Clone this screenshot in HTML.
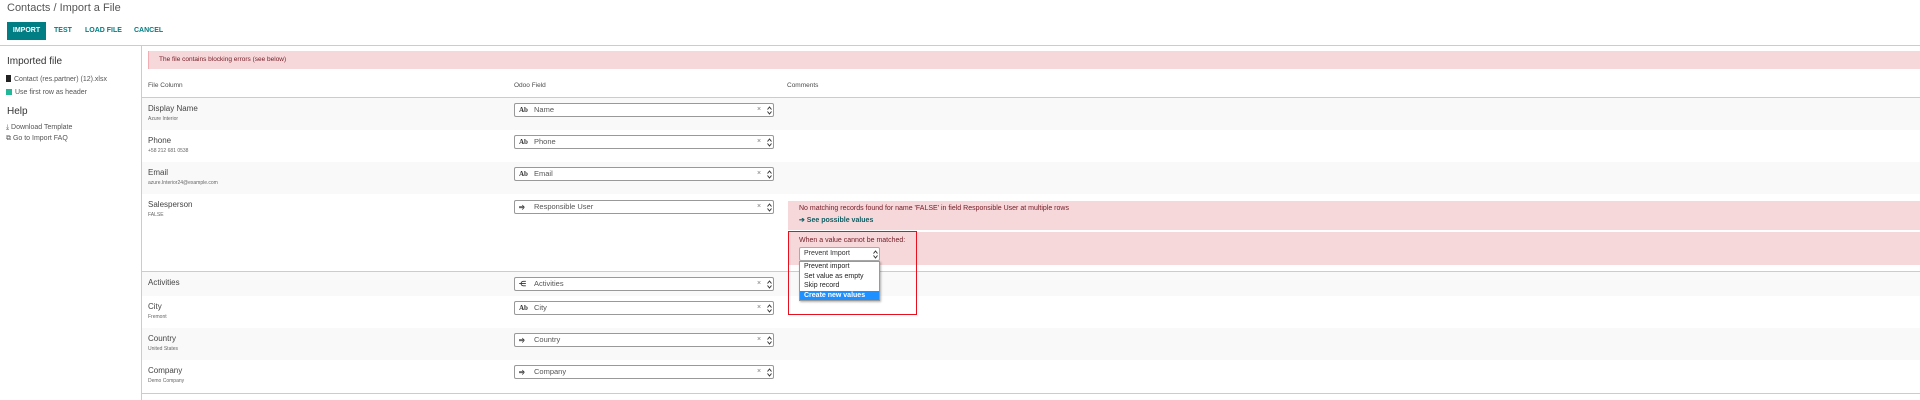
<!DOCTYPE html>
<html><head><meta charset="utf-8"><style>
*{margin:0;padding:0;box-sizing:border-box}
body{width:1920px;height:400px;background:#fff;font-family:"Liberation Sans",sans-serif;color:#4c4c4c;position:relative;overflow:hidden}
.a{position:absolute;white-space:nowrap}
.btn{position:absolute;top:22px;height:18px;font-size:7px;font-weight:bold;line-height:18px;color:#017e84}
.row{position:absolute;left:142px;right:0}
.lbl{position:absolute;left:6px;font-size:8px;color:#444}
.sub{position:absolute;left:6px;font-size:5px;color:#666}
.sel{position:absolute;left:514px;width:260px;height:14px;border:1px solid #999;border-radius:2px;background:#fff;font-size:7.5px;line-height:12px}
.sel .ic{position:absolute;left:4px;font-size:7px;color:#333;font-family:"Liberation Serif",serif;font-weight:bold}
.sel .t{position:absolute;left:19px;color:#555}
.sel .x{position:absolute;left:242px;color:#777;font-size:7px}
.sel svg,.ps svg{position:absolute;left:252px;top:2px}
.gray{background:#f9f9f9}
</style></head><body>
<div class="a" style="left:7px;top:2px;font-size:11px;color:#555">Contacts / Import a File</div>
<div class="btn" style="left:7px;width:39px;background:#017e84;color:#fff;text-align:center">IMPORT</div>
<div class="btn" style="left:54px">TEST</div>
<div class="btn" style="left:85px">LOAD FILE</div>
<div class="btn" style="left:134px">CANCEL</div>
<div class="a" style="left:0;right:0;top:45px;height:1px;background:#ccc"></div>
<div class="a" style="left:141px;top:45px;width:1px;height:355px;background:#ccc"></div>

<div class="a" style="left:7px;top:56px;font-size:10px;color:#333">Imported file</div>
<div class="a" style="left:6px;top:75px;font-size:7px;color:#555"><span style="display:inline-block;width:5px;height:7px;background:#222;vertical-align:-1px;margin-right:3px"></span>Contact (res.partner) (12).xlsx</div>
<div class="a" style="left:6px;top:89px;font-size:7px;color:#555"><span style="display:inline-block;width:6px;height:6px;background:#21b799;vertical-align:-1px;margin-right:3px"></span>Use first row as header</div>
<div class="a" style="left:7px;top:106px;font-size:10px;color:#333">Help</div>
<div class="a" style="left:6px;top:124px;font-size:7px;color:#555">⤓ Download Template</div>
<div class="a" style="left:6px;top:135px;font-size:7px;color:#555">⧉ Go to Import FAQ</div>

<div class="a" style="left:148px;right:0;top:51px;height:18px;background:#f6d7da;border-left:1px solid #f1aeb5"></div>
<div class="a" style="left:159px;top:56px;font-size:6.5px;color:#721c24">The file contains blocking errors (see below)</div>
<div class="a" style="left:148px;top:82px;font-size:6.5px">File Column</div>
<div class="a" style="left:514px;top:82px;font-size:6.5px">Odoo Field</div>
<div class="a" style="left:787px;top:82px;font-size:6.5px">Comments</div>
<div class="a" style="left:142px;right:0;top:97px;height:1px;background:#ccc"></div>

<div class="row gray" style="top:98px;height:32px"><div class="lbl" style="top:6px">Display Name</div><div class="sub" style="top:18px">Azure Interior</div></div>
<div class="row" style="top:130px;height:32px"><div class="lbl" style="top:6px">Phone</div><div class="sub" style="top:18px">+58 212 681 0538</div></div>
<div class="row gray" style="top:162px;height:32px"><div class="lbl" style="top:6px">Email</div><div class="sub" style="top:18px">azure.Interior24@example.com</div></div>
<div class="row" style="top:194px;height:77px"><div class="lbl" style="top:6px">Salesperson</div><div class="sub" style="top:18px">FALSE</div></div>
<div class="a" style="left:142px;right:0;top:271px;height:1px;background:#ccc"></div>
<div class="row gray" style="top:272px;height:24px"><div class="lbl" style="top:6px">Activities</div></div>
<div class="row" style="top:296px;height:32px"><div class="lbl" style="top:6px">City</div><div class="sub" style="top:18px">Fremont</div></div>
<div class="row gray" style="top:328px;height:32px"><div class="lbl" style="top:6px">Country</div><div class="sub" style="top:18px">United States</div></div>
<div class="row" style="top:360px;height:32px"><div class="lbl" style="top:6px">Company</div><div class="sub" style="top:18px">Demo Company</div></div>
<div class="a" style="left:142px;right:0;top:393px;height:1px;background:#ccc"></div>

<div class="sel" style="top:103px"><span class="ic">Ab</span><span class="t">Name</span><span class="x">×</span><svg width="5" height="9" viewBox="0 0 5 9"><path d="M0.5 3.5L2.5 1L4.5 3.5M0.5 5.5L2.5 8L4.5 5.5" fill="none" stroke="#333"/></svg></div>
<div class="sel" style="top:135px"><span class="ic">Ab</span><span class="t">Phone</span><span class="x">×</span><svg width="5" height="9" viewBox="0 0 5 9"><path d="M0.5 3.5L2.5 1L4.5 3.5M0.5 5.5L2.5 8L4.5 5.5" fill="none" stroke="#333"/></svg></div>
<div class="sel" style="top:167px"><span class="ic">Ab</span><span class="t">Email</span><span class="x">×</span><svg width="5" height="9" viewBox="0 0 5 9"><path d="M0.5 3.5L2.5 1L4.5 3.5M0.5 5.5L2.5 8L4.5 5.5" fill="none" stroke="#333"/></svg></div>
<div class="sel" style="top:200px"><span class="ic">⥤</span><span class="t">Responsible User</span><span class="x">×</span><svg width="5" height="9" viewBox="0 0 5 9"><path d="M0.5 3.5L2.5 1L4.5 3.5M0.5 5.5L2.5 8L4.5 5.5" fill="none" stroke="#333"/></svg></div>
<div class="sel" style="top:277px"><span class="ic">⋲</span><span class="t">Activities</span><span class="x">×</span><svg width="5" height="9" viewBox="0 0 5 9"><path d="M0.5 3.5L2.5 1L4.5 3.5M0.5 5.5L2.5 8L4.5 5.5" fill="none" stroke="#333"/></svg></div>
<div class="sel" style="top:301px"><span class="ic">Ab</span><span class="t">City</span><span class="x">×</span><svg width="5" height="9" viewBox="0 0 5 9"><path d="M0.5 3.5L2.5 1L4.5 3.5M0.5 5.5L2.5 8L4.5 5.5" fill="none" stroke="#333"/></svg></div>
<div class="sel" style="top:333px"><span class="ic">⥤</span><span class="t">Country</span><span class="x">×</span><svg width="5" height="9" viewBox="0 0 5 9"><path d="M0.5 3.5L2.5 1L4.5 3.5M0.5 5.5L2.5 8L4.5 5.5" fill="none" stroke="#333"/></svg></div>
<div class="sel" style="top:365px"><span class="ic">⥤</span><span class="t">Company</span><span class="x">×</span><svg width="5" height="9" viewBox="0 0 5 9"><path d="M0.5 3.5L2.5 1L4.5 3.5M0.5 5.5L2.5 8L4.5 5.5" fill="none" stroke="#333"/></svg></div>

<div class="a" style="left:788px;right:0;top:201px;height:29px;background:#f6d7da"></div>
<div class="a" style="left:799px;top:205px;font-size:7px;color:#721c24">No matching records found for name 'FALSE' in field Responsible User at multiple rows</div>
<div class="a" style="left:799px;top:216px;font-size:7px;color:#0f5e63;font-weight:bold">➔ See possible values</div>
<div class="a" style="left:788px;right:0;top:232px;height:33px;background:#f6d7da"></div>
<div class="a" style="left:799px;top:237px;font-size:7px;color:#721c24">When a value cannot be matched:</div>
<div class="a ps" style="left:799px;top:247px;width:81px;height:14px;background:#fff;border:1px solid #aaa;border-radius:2px;font-size:7px;line-height:12px;padding-left:4px;color:#333">Prevent Import<svg width="5" height="9" viewBox="0 0 5 9" style="left:73px"><path d="M0.5 3.5L2.5 1L4.5 3.5M0.5 5.5L2.5 8L4.5 5.5" fill="none" stroke="#333"/></svg></div>
<div class="a" style="left:799px;top:261px;width:81px;height:40px;background:#fff;border:1px solid #999;box-shadow:1px 1px 2px rgba(0,0,0,.3);font-size:7px;line-height:9.5px;color:#222">
<div style="padding-left:4px">Prevent import</div><div style="padding-left:4px">Set value as empty</div><div style="padding-left:4px">Skip record</div><div style="padding-left:4px;background:#1e90ff;color:#fff;font-weight:bold">Create new values</div></div>
<div class="a" style="left:788px;top:231px;width:129px;height:84px;border:1px solid #e8101c"></div>
</body></html>
